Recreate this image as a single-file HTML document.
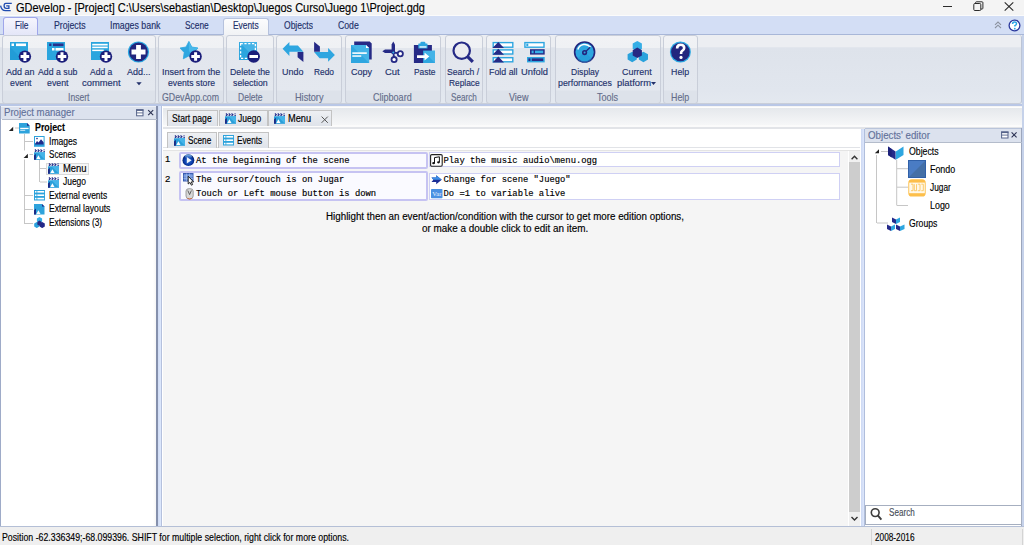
<!DOCTYPE html>
<html><head><meta charset="utf-8">
<style>
*{margin:0;padding:0;box-sizing:border-box}
html,body{width:1024px;height:545px;overflow:hidden;background:#f0f0f0;font-family:"Liberation Sans",sans-serif;position:relative}
.a,.t,svg{position:absolute}
.t{white-space:pre;line-height:normal;transform-origin:0 0;-webkit-text-stroke:0.15px currentColor}
.grp{position:absolute;top:35px;height:69px;border:1px solid #c9ced9;border-radius:3px;background:linear-gradient(#f1f2f5 0,#eff1f4 11.5px,#e2e6ed 12.5px,#e4e8ef 54px,#dde2ea 55px,#dde2ea 100%)}
</style></head><body>
<!-- title bar -->
<div class="a" style="left:0;top:0;width:1024px;height:16px;background:#f4f4f4"></div>
<!-- ribbon tab bar -->
<div class="a" style="left:0;top:15.3px;width:1024px;height:19.7px;background:#d3def5;border-top:1px solid #fbfbfb;border-bottom:1px solid #a8b7d8"></div>
<div class="a" style="left:3px;top:17px;width:35px;height:18px;border:1px solid #9fa6ea;border-bottom:none;border-radius:3px 3px 0 0;background:linear-gradient(#f5f5fd,#e4e6f8)"></div>
<div class="a" style="left:222.5px;top:17.5px;width:46px;height:18px;border:1px solid #b6c2dd;border-bottom:none;border-radius:3px 3px 0 0;background:linear-gradient(#fcfcfd,#f0f2f5)"></div>

<!-- ribbon panel -->
<div class="a" style="left:0;top:35px;width:1024px;height:70px;background:linear-gradient(#eceef2 0,#eceef2 11.8px,#dee3eb 12.8px,#e1e6ee 55px,#e4e9f0 100%)"></div>
<div class="a" style="left:0;top:35px;width:1022px;height:69px;border-right:1px solid #bcc5d6;border-bottom:1px solid #c9ced9;border-radius:0 3px 3px 0"></div>
<div class="a" style="left:0;top:104px;width:1024px;height:2.4px;background:#b9c7e6"></div>

<div class="grp" style="left:1.5px;width:154px"></div>
<div class="grp" style="left:158px;width:65.5px"></div>
<div class="grp" style="left:226px;width:47.5px"></div>
<div class="grp" style="left:276px;width:65.5px"></div>
<div class="grp" style="left:344.5px;width:96.5px"></div>
<div class="grp" style="left:444.5px;width:38.5px"></div>
<div class="grp" style="left:486px;width:65px"></div>
<div class="grp" style="left:554.5px;width:106px"></div>
<div class="grp" style="left:663px;width:34.5px"></div>

<!-- project manager -->
<div class="a" style="left:0;top:106.3px;width:158px;height:421px;border-left:1.3px solid #9eabc8;border-right:2px solid #8590ac;border-bottom:1.3px solid #98a3bc;background:linear-gradient(90deg,#fff 0,#fff 152px,#f3f3f3 156px)"></div>
<div class="a" style="left:1.3px;top:106.3px;width:155.2px;height:13px;background:#dce2ee;border-top:1px solid #eef1f7"></div>
<!-- splitter & main -->
<div class="a" style="left:158px;top:106px;width:4px;height:421px;background:linear-gradient(90deg,#cfdbf4,#dbe6fb 2.5px,#b5c1dd 3.2px,#b5c1dd 4px)"></div>
<div class="a" style="left:162px;top:106px;width:860px;height:420px;background:#f5f5f5;border-left:1.5px solid #fff"></div>
<div class="a" style="left:162.5px;top:106.5px;width:860px;height:1px;background:#fdfdfd"></div>
<div class="a" style="left:162.5px;top:107.5px;width:860px;height:17.5px;background:linear-gradient(#e5e8ec,#f6f7f8)"></div>
<div class="a" style="left:162.5px;top:125px;width:860px;height:2.3px;background:#fbfbfb"></div>
<div class="a" style="left:162.5px;top:127.3px;width:860px;height:1.8px;background:#e2e4e8"></div>
<div class="a" style="left:162.5px;top:129px;width:698.5px;height:18px;background:#fff"></div>
<div class="a" style="left:162.5px;top:147px;width:698.5px;height:1px;background:#e1e3e7"></div>
<div class="a" style="left:162.5px;top:148px;width:698.5px;height:2.3px;background:#fff"></div>
<div class="a" style="left:162.5px;top:150.3px;width:698.5px;height:0.8px;background:#e4e4e4"></div>
<!-- objects editor -->
<div class="a" style="left:860px;top:128.5px;width:5px;height:397.5px;background:linear-gradient(90deg,#fff 0,#fff 0.9px,#ccd8f2 1px,#dce6fc 3.8px,#b0bedc 3.9px,#b0bedc 5px)"></div>
<div class="a" style="left:865px;top:128.4px;width:157.3px;height:397.5px;border-right:1px solid #9ca6bc;background:#fff"></div>
<div class="a" style="left:865.3px;top:128.4px;width:156.2px;height:13.3px;background:#dce2ee;border-top:1px solid #b9c4da"></div>
<div class="a" style="left:1022px;top:35px;width:2px;height:492px;background:#c6d2ea"></div>
<!-- status bar -->
<div class="a" style="left:0;top:525.8px;width:1024px;height:1.6px;background:#b4bfd6"></div>
<div class="a" style="left:0;top:527.4px;width:1024px;height:18px;background:#efefef"></div>
<div class="a" style="left:871px;top:529px;width:1px;height:16px;background:#d4d4d4"></div>
<div class="a" style="left:1022px;top:529px;width:1px;height:16px;background:#d4d4d4"></div>

<svg width="0" height="0" style="position:absolute">
<defs>
<g id="plus"><circle cx="0" cy="0" r="6.2" fill="#1b1e7a"/><path d="M-1.5-4.3h3v2.8h2.8v3h-2.8v2.8h-3v-2.8h-2.8v-3h2.8z" fill="#fff"/></g>
<g id="minus"><circle cx="0" cy="0" r="6.2" fill="#1b1e7a"/><rect x="-4.3" y="-1.5" width="8.6" height="3" fill="#fff"/></g>
<g id="clap">
 <path d="M0.9 0.5L2.3 1.7L0.9 2.9M3.7 0.5L5.1 1.7L3.7 2.9M6.5 0.5L7.9 1.7L6.5 2.9" fill="none" stroke="#1f2a8a" stroke-width="1.15"/>
 <rect x="9.5" y="0.3" width="1.1" height="1.1" fill="#1f2a8a"/><rect x="9.5" y="2" width="1.3" height="1.2" fill="#1f2a8a"/>
 <rect x="0" y="3.3" width="11" height="7.5" fill="#2a9fda"/>
 <path d="M3.5 3.3H11V10.8z" fill="#45b4e8"/>
 <path d="M0 6.4L1.9 4.8V10.8H0z" fill="#1c2a86"/>
 <path d="M2.3 10L4.4 6.3L6.5 10z" fill="#fff"/>
</g>
<g id="evlist">
 <rect x="0" y="0" width="11" height="10.5" fill="#2ea3dc"/>
 <rect x="1" y="1" width="1.5" height="1.6" fill="#fff"/><rect x="3.3" y="1" width="6.8" height="1.6" fill="#fff"/>
 <rect x="1" y="4.4" width="1.5" height="1.6" fill="#fff"/><rect x="3.3" y="4.4" width="6.8" height="1.6" fill="#fff"/>
 <rect x="1" y="7.8" width="1.5" height="1.6" fill="#fff"/><rect x="3.3" y="7.8" width="6.8" height="1.6" fill="#fff"/>
</g>
<g id="hexes">
 <path d="M0-5.2L4.5-2.6V2.6L0 5.2-4.5 2.6V-2.6z" transform="translate(0,0)" fill="#30a6df"/>
</g>
</defs>
</svg>

<!-- title logo -->
<svg style="left:0;top:0" width="14" height="14" viewBox="0 0 14 14"><path d="M11.8 3.3H5.8Q4.1 3.3 4.1 5.7Q4.1 8.3 6.2 8.3H8.9V5.9H6.2" fill="none" stroke="#1f4cb0" stroke-width="1.3"/><path d="M0.6 5.6Q1.4 10.6 5.6 10.6H10.7" fill="none" stroke="#1f4cb0" stroke-width="1.3"/></svg>
<!-- window controls -->
<div class="a" style="left:943px;top:5.5px;width:9px;height:1.2px;background:#2b2b2b"></div>
<svg style="left:973px;top:1px" width="11" height="10" viewBox="0 0 11 10"><rect x="0.8" y="2.5" width="7" height="7" rx="1" fill="none" stroke="#2b2b2b" stroke-width="1"/><path d="M2.6 2.5V1.6Q2.6 0.8 3.4 0.8H9Q9.9 0.8 9.9 1.6V7.2Q9.9 8 9.1 8H7.8" fill="none" stroke="#2b2b2b" stroke-width="1"/></svg>
<svg style="left:1004px;top:1.5px" width="10" height="9" viewBox="0 0 10 9"><path d="M0.7 0.4L9.3 8.6M9.3 0.4L0.7 8.6" stroke="#2b2b2b" stroke-width="1.1"/></svg>
<!-- ribbon right -->
<svg style="left:994px;top:21px" width="8" height="8" viewBox="0 0 8 8"><path d="M1 3.8L4 1L7 3.8M1 7L4 4.2L7 7" fill="none" stroke="#8c93a0" stroke-width="1.1"/></svg>
<svg style="left:1008px;top:19px" width="13" height="13" viewBox="0 0 13 13"><circle cx="6.5" cy="6.5" r="5.4" fill="#fff" stroke="#2c3a9e" stroke-width="1.3"/><path d="M4.6 5Q4.6 3 6.6 3Q8.6 3 8.5 4.8Q8.4 6 6.9 6.6V7.6" fill="none" stroke="#2aa6e6" stroke-width="1.5"/><circle cx="6.8" cy="9.7" r="0.9" fill="#2aa6e6"/></svg>

<!-- ribbon icons -->
<!-- add an event -->
<svg style="left:10px;top:42px" width="22" height="22" viewBox="0 0 22 22">
 <rect x="0" y="0" width="18" height="18" fill="#2aa5de"/><path d="M0 5L13 18H0z" fill="#1e96d2" opacity=".6"/>
 <rect x="1.5" y="1.5" width="2.5" height="2.5" fill="#fff"/><rect x="6" y="1.5" width="10" height="2.6" fill="#fff"/>
 <use href="#plus" x="14.9" y="14.6"/>
</svg>
<!-- add a sub event -->
<svg style="left:47px;top:42px" width="22" height="22" viewBox="0 0 22 22">
 <rect x="0" y="0" width="18" height="18" fill="#2aa5de"/>
 <rect x="2.2" y="1.5" width="2.2" height="2.5" fill="#2a2f8a"/><rect x="6" y="1.5" width="10.5" height="2.6" fill="#2a2f8a"/>
 <rect x="5" y="6" width="2.5" height="2.5" fill="#fff"/><rect x="8.5" y="6" width="8" height="2.6" fill="#fff"/>
 <use href="#plus" x="15" y="14.6"/>
</svg>
<!-- add a comment -->
<svg style="left:91px;top:42px" width="22" height="22" viewBox="0 0 22 22">
 <rect x="0" y="0" width="18" height="18" fill="#2aa5de"/>
 <rect x="1.2" y="1.8" width="15.5" height="1.7" fill="#fff"/><rect x="1.2" y="4.6" width="15.5" height="1.6" fill="#fff"/><rect x="1.2" y="7.6" width="11.5" height="1.5" fill="#fff"/>
 <use href="#plus" x="15" y="14.6"/>
</svg>
<!-- add... -->
<svg style="left:127px;top:41px" width="23" height="23" viewBox="0 0 23 23">
 <circle cx="11.5" cy="11" r="10.6" fill="#2aa8e2"/><circle cx="11.5" cy="11" r="9.4" fill="#22267e"/>
 <path d="M9.1 4h4.8v4.6h4.6v4.8h-4.6v4.6h-4.8v-4.6h-4.6v-4.8h4.6z" fill="#fff"/>
</svg>
<svg style="left:136px;top:81.5px" width="6" height="4" viewBox="0 0 6 4"><path d="M0.3 0.3H5.7L3 3.3Z" fill="#22306a"/></svg>
<!-- star -->
<svg style="left:180px;top:41px" width="24" height="24" viewBox="0 0 24 24">
 <path d="M8.9 0.4L11.8 6.0L18.0 7.0L13.6 11.5L14.5 17.8L8.9 14.9L3.3 17.8L4.2 11.5L0 7.0L6.0 6.0Z" fill="#2ea6e0" stroke="#2ea6e0" stroke-width="0.8" stroke-linejoin="round"/>
 <path d="M8.9 0.4L11.8 6.0L18.0 7.0L13.6 11.5L14.5 17.8L8.9 10z" fill="#48b8ea"/>
 <use href="#plus" x="15.6" y="15.5"/>
</svg>
<!-- delete -->
<svg style="left:239px;top:42px" width="22" height="22" viewBox="0 0 22 22">
 <rect x="0" y="0" width="18" height="18" fill="#2aa5de"/><path d="M0 0H18V18z" fill="#45b3e6"/>
 <path d="M1.6 1.6H16.4V16.4H1.6z" fill="none" stroke="#fff" stroke-width="1.3" stroke-dasharray="2.2 1.6"/>
 <use href="#minus" x="14.7" y="14.5"/>
</svg>
<!-- undo -->
<svg style="left:280px;top:38px" width="60" height="28" viewBox="0 0 60 28">
 <path d="M2.6 10.8L9.4 4.1V7.6H17.9L23.4 13.8H9.4V17.9Z" fill="#2ea6e0"/>
 <path d="M17.6 14.1H23.4V24L17.6 19.3Z" fill="#262a86"/>
 <g transform="translate(31.5 0) rotate(180 13 13.9)">
 <path d="M2.6 10.8L9.4 4.1V7.6H17.9L23.4 13.8H9.4V17.9Z" fill="#2ea6e0"/>
 <path d="M17.6 14.1H23.4V24L17.6 19.3Z" fill="#262a86"/>
 </g>
</svg>
<!-- copy -->
<svg style="left:348px;top:38px" width="90" height="28" viewBox="0 0 90 28">
 <path d="M6.2 3.5H21.7L23.7 5.5V21.5H6.2z" fill="#262a86"/>
 <path d="M3 7H18L21.1 10.1V25H3z" fill="#2ea6e0"/><path d="M3 7H18L21.1 10.1V25z" fill="#48b6e8" opacity=".8"/>
 <path d="M18 7V10.1H21.1z" fill="#fff"/>
 <rect x="4.3" y="14.3" width="14.5" height="1.6" fill="#fff"/><rect x="4.3" y="17.3" width="9" height="1.5" fill="#fff"/>
 <!-- cut -->
 <path d="M45.3 3.5L47 6.5V16H43.6V6.5Z" fill="#262a86"/>
 <path d="M34.3 13.2L37 11.5H45.3V15H37Z" fill="#262a86"/>
 <circle cx="52.3" cy="15.8" r="2.6" fill="#fff" stroke="#262a86" stroke-width="1.8"/>
 <circle cx="46.1" cy="21.6" r="2.6" fill="#fff" stroke="#262a86" stroke-width="1.8"/>
 <path d="M45.3 14.5L50 15.2M45.3 14.5L46 19" stroke="#262a86" stroke-width="1.8"/>
 <circle cx="45.3" cy="14.5" r="1" fill="#35b0ea"/>
 <!-- paste -->
 <rect x="65.9" y="7" width="18" height="18" fill="#262a86"/>
 <rect x="70.3" y="5.6" width="9.2" height="5" rx="0.5" fill="#2ea6e0"/><rect x="72.4" y="3.8" width="5" height="3" rx="1.2" fill="#2ea6e0"/>
 <rect x="71.5" y="8.3" width="7" height="1.3" fill="#fff"/>
 <rect x="75.1" y="12.7" width="11.9" height="12.3" fill="#2ea6e0"/><path d="M75.1 12.7H87V25z" fill="#48b6e8" opacity=".8"/>
 <path d="M69 17.2H76.5V14.6L81.3 18.6L76.5 22.6V20H69z" fill="#fff"/>
</svg>
<!-- search -->
<svg style="left:450px;top:38px" width="100" height="28" viewBox="0 0 100 28">
 <circle cx="11.7" cy="12.7" r="8.2" fill="#ececf0" stroke="#262a86" stroke-width="2.2"/>
 <path d="M6.5 7.5A7 7 0 0 1 17 17z" fill="#dadbe2" opacity="0"/>
 <path d="M17.3 18.3L22.8 23.8" stroke="#262a86" stroke-width="3.2"/>
 <!-- fold all -->
 <rect x="43.2" y="4.6" width="19.6" height="4.6" fill="#fff" stroke="#2ea6e0" stroke-width="1.4"/>
 <rect x="43.2" y="11.9" width="19.6" height="4.1" fill="#fff" stroke="#2ea6e0" stroke-width="1.4"/>
 <rect x="43.2" y="19.7" width="19.6" height="4.1" fill="#fff" stroke="#2ea6e0" stroke-width="1.4"/>
 <path d="M42.5 9.9L48.3 3.9L54 9.9z" fill="#262a86"/>
 <path d="M42.5 16.7L48.3 10.8L54 16.7z" fill="#262a86"/>
 <path d="M42.5 24.5L48.3 18.5L54 24.5z" fill="#262a86"/>
 <!-- unfold -->
 <rect x="74.9" y="4.6" width="19.1" height="4.6" fill="#fff" stroke="#2ea6e0" stroke-width="1.4"/>
 <rect x="76.3" y="5.6" width="2" height="2.6" fill="#2ea6e0"/>
 <rect x="80" y="11.2" width="14.7" height="5.4" fill="#262a86"/>
 <rect x="81.6" y="12.6" width="2" height="2.6" fill="#35aee6"/><rect x="85" y="12.6" width="8.2" height="2.6" fill="#35aee6"/>
 <rect x="77" y="19" width="17.7" height="5.4" fill="#2ea6e0"/>
 <rect x="78.4" y="20.4" width="2" height="2.6" fill="#262a86"/><rect x="81.8" y="20.4" width="11.4" height="2.6" fill="#262a86"/>
</svg>
<!-- display performances / platform / help -->
<svg style="left:570px;top:38px" width="125" height="28" viewBox="0 0 125 28">
 <circle cx="14.6" cy="14" r="10" fill="#2ea6e0" stroke="#22267e" stroke-width="1.6"/>
 <path d="M14.6 14L22 21A10 10 0 0 1 7 21z" fill="#1f98d4" opacity=".5"/>
 <path d="M7.8 11.5A7.3 7.3 0 0 1 20.5 9.2" fill="none" stroke="#fff" stroke-width="1.5"/>
 <path d="M14.6 14.6L20.2 9.2" stroke="#22267e" stroke-width="1.3"/>
 <circle cx="14.6" cy="14.6" r="2.6" fill="#22267e"/><circle cx="14.6" cy="14.6" r="1" fill="#2ea6e0"/>
 <!-- platform -->
 <path d="M67.3 3L71.9 5.6V10.9L67.3 13.5L62.7 10.9V5.6z" fill="#35aee6"/>
 <path d="M62.2 13.7L66.8 16.3V21.6L62.2 24.2L57.6 21.6V16.3z" fill="#2aa2dc"/>
 <path d="M73.4 13.7L78 16.3V21.6L73.4 24.2L68.8 21.6V16.3z" fill="#2aa2dc"/>
 <path d="M67.3 9.6L71.9 12.2V17.5L67.3 20.1L62.7 17.5V12.2z" fill="#252983"/>
 <!-- help -->
 <circle cx="110.4" cy="14" r="10.5" fill="#2aa8e2"/><circle cx="110.4" cy="14" r="9.3" fill="#22267e"/>
 <path d="M107.1 10.6Q107.1 6.8 110.7 6.8Q114.2 6.8 114.2 10Q114.2 12 111.9 13.2Q111.1 13.7 111.1 15.2V16" fill="none" stroke="#fff" stroke-width="2.6"/>
 <circle cx="111" cy="19.4" r="1.6" fill="#fff"/>
</svg>
<svg style="left:651px;top:82px" width="5" height="3" viewBox="0 0 5 3"><path d="M0 0H5L2.5 3Z" fill="#22306a"/></svg>

<!-- project manager caption buttons -->
<svg style="left:135px;top:108px" width="20" height="9" viewBox="0 0 20 9">
 <rect x="1.6" y="1.8" width="6.4" height="6" fill="#fff" stroke="#56638a" stroke-width="1"/><rect x="1.1" y="1.3" width="7.4" height="1.6" fill="#56638a"/><path d="M1.6 4.9H8" stroke="#56638a" stroke-width="0.9"/>
 <path d="M13.2 2.2L18.2 7.2M18.2 2.2L13.2 7.2" stroke="#2c3354" stroke-width="1.1"/>
</svg>
<div class="a" style="left:2px;top:119px;width:155px;height:1px;background:#b4bccb"></div>

<!-- project tree -->
<svg style="left:0;top:120px" width="157" height="110" viewBox="0 0 157 110">
 <g stroke="#c6c6c6" stroke-width="1">
  <path d="M24.5 14V30.5"/><path d="M24.5 39.5V104"/><path d="M25 21.5H33"/><path d="M29.5 34.5H33"/><path d="M25 75.5H33"/><path d="M25 89.5H33"/><path d="M25 103.5H33"/>
  <path d="M39.5 40V62"/><path d="M40 48.5H47"/><path d="M40 62H47"/><path d="M15 8H19"/>
 </g>
 <path d="M8.9 11L13.2 6.8V11z" fill="#222"/>
 <path d="M23.6 38L27.9 33.8V38z" fill="#222"/>
</svg>
<!-- project icon -->
<svg style="left:19px;top:122.5px" width="11" height="11" viewBox="0 0 11 11">
 <path d="M0 0H8L10.7 2.7V10.6H0z" fill="#2ea3dc"/><path d="M8 0L10.7 2.7H8z" fill="#1f2a8a"/>
 <rect x="1.2" y="4.8" width="8.4" height="1.3" fill="#fff"/><rect x="1.2" y="6.8" width="5" height="1" fill="#fff" opacity=".8"/>
</svg>
<!-- images icon -->
<svg style="left:33.5px;top:136px" width="11" height="11" viewBox="0 0 11 11">
 <rect x="0" y="0" width="10.6" height="10.8" fill="#2ea3dc"/><rect x="1" y="1" width="8.6" height="6.5" fill="#fff"/>
 <path d="M1 8L3 5L4.6 6.4L7 3.2L9.6 6.2V8.6H1z" fill="#1f2a8a"/><circle cx="3" cy="2.6" r="0.8" fill="#1f2a8a"/>
</svg>
<svg style="left:33.5px;top:149.2px" width="11" height="11" viewBox="0 0 11 11"><use href="#clap"/></svg>
<div class="a" style="left:46px;top:162.5px;width:43px;height:12.5px;border:1px solid #dadada;background:#f6f6f6"></div>
<svg style="left:47.8px;top:163px" width="11" height="11" viewBox="0 0 11 11"><use href="#clap"/></svg>
<svg style="left:47.8px;top:176.7px" width="11" height="11" viewBox="0 0 11 11"><use href="#clap"/></svg>
<svg style="left:33.7px;top:190px" width="11" height="11" viewBox="0 0 11 11"><use href="#evlist"/></svg>
<svg style="left:33.7px;top:203.5px" width="11" height="11" viewBox="0 0 11 11">
 <path d="M0 0H8L10.5 2.5V10.4H0z" fill="#2ea3dc"/><path d="M8 0L10.5 2.5H8z" fill="#1f2a8a"/>
 <path d="M0 6.2L2 4.5V10.4H0z" fill="#1c2a86"/><path d="M2.3 10L4.4 6.2L6.5 10z" fill="#fff"/>
</svg>
<svg style="left:33.5px;top:216.8px" width="11" height="11" viewBox="-5.5 -5.5 11 11">
 <path d="M0-5.4L2.6-3.9V-0.9L0 0.6L-2.6-0.9V-3.9z" fill="#35aee6"/>
 <path d="M-2.7-0.4L-0.1 1.1V4.1L-2.7 5.6L-5.3 4.1V1.1z" fill="#2aa2dc"/>
 <path d="M2.7-0.4L5.3 1.1V4.1L2.7 5.6L0.1 4.1V1.1z" fill="#22288a"/>
 <path d="M0-1.9L2.2-0.6V1.9L0 3.2L-2.2 1.9V-0.6z" fill="#252983"/>
</svg>

<!-- doc tabs -->
<div class="a" style="left:166.5px;top:110.3px;width:51.5px;height:16px;border:1px solid #c3c3c3;border-bottom:none;background:linear-gradient(#eef0f3,#dfe3ea)"></div>
<div class="a" style="left:218.5px;top:110.3px;width:49px;height:16px;border:1px solid #c3c3c3;border-bottom:none;background:linear-gradient(#eef0f3,#dfe3ea)"></div>
<div class="a" style="left:268px;top:110.3px;width:63.5px;height:16px;border:1px solid #c3c3c3;border-bottom:none;background:linear-gradient(#eef0f3,#dfe3ea)"></div>
<svg style="left:224.6px;top:113.4px" width="11" height="11" viewBox="0 0 11 11"><use href="#clap"/></svg>
<svg style="left:274.2px;top:113.4px" width="11" height="11" viewBox="0 0 11 11"><use href="#clap"/></svg>
<svg style="left:320.5px;top:115.8px" width="8" height="8" viewBox="0 0 8 8"><path d="M0.6 0.6L6.8 6.8M6.8 0.6L0.6 6.8" stroke="#555" stroke-width="1"/></svg>
<!-- inner tabs -->
<div class="a" style="left:167.3px;top:132.3px;width:50px;height:15.5px;border:1px solid #c3c3c3;border-bottom:none;background:linear-gradient(#eef0f3,#dfe3ea)"></div>
<div class="a" style="left:217.7px;top:132.3px;width:51px;height:15.5px;border:1px solid #c3c3c3;border-bottom:none;background:linear-gradient(#eef0f3,#dfe3ea)"></div>
<svg style="left:174px;top:135.2px" width="11" height="11" viewBox="0 0 11 11"><use href="#clap"/></svg>
<svg style="left:223.3px;top:135.3px" width="11" height="11" viewBox="0 0 11 11"><use href="#evlist"/></svg>

<!-- events -->
<div class="a" style="left:179.2px;top:151.5px;width:249px;height:17px;border:2px solid #c6c3f2;border-radius:2px;background:#fafaff"></div>
<div class="a" style="left:429.3px;top:152.3px;width:411px;height:14.5px;border:1px solid #cfd0f4;background:#fff"></div>
<div class="a" style="left:179.2px;top:171.2px;width:249px;height:30.3px;border:2px solid #c6c3f2;border-radius:2px;background:#fafaff"></div>
<div class="a" style="left:429.3px;top:172.8px;width:411px;height:27.2px;border:1px solid #cfd0f4;background:#fff"></div>
<!-- play icon -->
<svg style="left:182px;top:154px" width="13" height="13" viewBox="0 0 13 13">
 <defs><radialGradient id="pg" cx="0.5" cy="0.55" r="0.55"><stop offset="0" stop-color="#2a70d8"/><stop offset="0.65" stop-color="#0a3aa8"/><stop offset="1" stop-color="#001a5e"/></radialGradient>
 <linearGradient id="pg2" x1="0" y1="0" x2="0" y2="1"><stop offset="0" stop-color="#8cc8ff" stop-opacity=".9"/><stop offset="1" stop-color="#8cc8ff" stop-opacity="0"/></linearGradient></defs>
 <circle cx="6.4" cy="6.2" r="5.9" fill="url(#pg)"/>
 <ellipse cx="6.4" cy="2.6" rx="3.6" ry="2" fill="url(#pg2)"/>
 <path d="M4.8 3L9.6 6.2L4.8 9.4z" fill="#f0f4fa"/>
</svg>
<!-- cursor icon -->
<svg style="left:182.8px;top:173.3px" width="12" height="13" viewBox="0 0 12 13">
 <rect x="0.5" y="0.5" width="9.5" height="7.5" fill="#6b8fd8" stroke="#3a5cb0" stroke-width="1"/>
 <path d="M3.5 0.5V8M6.5 0.5V8M0.5 3H10M0.5 5.5H10" stroke="#a9c2f0" stroke-width="0.6"/>
 <path d="M5.2 3.2V11L7 9.4L8.4 12.2L9.6 11.6L8.3 8.9H10.6z" fill="#fff" stroke="#111" stroke-width="0.9"/>
</svg>
<!-- mouse icon -->
<svg style="left:184.5px;top:187.8px" width="10" height="12" viewBox="0 0 10 12">
 <path d="M1 3Q1 0.6 4.6 0.6Q8.2 0.6 8.2 3V8Q8.2 11 4.6 11Q1 11 1 8z" fill="#d8d8d8" stroke="#8a8a8a" stroke-width="0.8"/>
 <path d="M2.8 2.5L4.6 6.6L6.4 2.5" fill="none" stroke="#555" stroke-width="0.9"/>
 <path d="M2.5 10.4Q4.6 11.6 6.8 10.4" stroke="#e05a20" stroke-width="0.8" fill="none"/>
</svg>
<!-- music icon -->
<svg style="left:430px;top:154px" width="13" height="13" viewBox="0 0 13 13">
 <rect x="0.6" y="0.6" width="11.6" height="11.6" rx="1.2" fill="#fff" stroke="#222" stroke-width="1.1"/>
 <path d="M4.5 9V3.6L9.4 2.8V8" fill="none" stroke="#111" stroke-width="1"/>
 <ellipse cx="3.6" cy="9.2" rx="1.4" ry="1.1" fill="#111"/><ellipse cx="8.5" cy="8.3" rx="1.4" ry="1.1" fill="#111"/>
</svg>
<!-- arrow icon -->
<svg style="left:430.5px;top:175px" width="12" height="10" viewBox="0 0 12 10">
 <path d="M0.5 2.4H5.2V0.2L10.8 4.8L5.2 9.2V7H0.5L2.4 4.8z" fill="#1c2f96"/><path d="M0.5 2.4H5.2V0.2L10.8 4.8H2.4z" fill="#3d8ee6"/>
</svg>
<!-- var icon -->
<svg style="left:430.5px;top:188.5px" width="12" height="10" viewBox="0 0 12 10">
 <rect x="0" y="0" width="11.5" height="9.3" rx="0.8" fill="#4a90e2"/>
 <text x="5.8" y="7.2" font-size="6.5" text-anchor="middle" fill="#e8f2ff" font-family="Liberation Serif">Var</text>
</svg>
<!-- scrollbar -->
<div class="a" style="left:847.5px;top:151px;width:1px;height:375px;background:#fff"></div><div class="a" style="left:848.8px;top:151px;width:11.2px;height:375px;background:#f0f0f0"></div>
<div class="a" style="left:849px;top:162px;width:11px;height:349.5px;background:#cdcdcd"></div>
<svg style="left:849px;top:151.8px" width="11" height="11" viewBox="0 0 11 11"><path d="M2.6 7.2L5.5 4.3L8.4 7.2" fill="none" stroke="#333" stroke-width="1.4"/></svg>
<svg style="left:849px;top:513px" width="11" height="11" viewBox="0 0 11 11"><path d="M2.5 4L5.5 7L8.5 4" fill="none" stroke="#333" stroke-width="1.4"/></svg>

<!-- objects editor caption buttons -->
<svg style="left:999px;top:130px" width="22" height="10" viewBox="0 0 22 10">
 <rect x="2.6" y="2" width="6.4" height="6" fill="#fff" stroke="#56638a" stroke-width="1"/><rect x="2.1" y="1.5" width="7.4" height="1.6" fill="#56638a"/><path d="M2.6 5.1H9" stroke="#56638a" stroke-width="0.9"/>
 <path d="M12.6 2.4L17.6 7.4M17.6 2.4L12.6 7.4" stroke="#2c3354" stroke-width="1.1"/>
</svg>
<div class="a" style="left:865px;top:141.5px;width:157px;height:1px;background:#b4bccb"></div>
<!-- objects tree -->
<svg style="left:865px;top:142px" width="157" height="95" viewBox="0 0 157 95">
 <g stroke="#c6c6c6" stroke-width="1">
  <path d="M11.5 13V81"/><path d="M12 81H23"/><path d="M16 9.5H23"/>
  <path d="M31.7 18V63.5"/><path d="M32 26.7H43"/><path d="M32 45.2H43"/><path d="M32 63.5H43"/>
 </g>
 <path d="M9.8 11.3L14 7.3V11.3z" fill="#222"/>
</svg>
<!-- objects book icon -->
<svg style="left:888.4px;top:146.3px" width="16" height="14" viewBox="0 0 16 14">
 <path d="M0 0.6L7.6 5.6V13.8L0 9z" fill="#252a8a"/><path d="M15.5 0.6L7.8 5.6V13.8L15.5 9z" fill="#2ea6e0"/>
 <path d="M0 0.6L3.6 3V11.4L0 9z" fill="#1c217a"/>
</svg>
<!-- fondo -->
<svg style="left:907.9px;top:160.1px" width="18" height="18" viewBox="0 0 18 18">
 <rect x="0.5" y="0.5" width="17" height="17" fill="#4a7cc4" stroke="#3060a8" stroke-width="1"/><path d="M17 1V17H1z" fill="#446fa6"/>
</svg>
<!-- jugar -->
<svg style="left:907.9px;top:178.6px" width="18" height="18" viewBox="0 0 18 18">
 <rect x="0.3" y="0.3" width="17.4" height="17.2" rx="3.6" fill="#fdbf4a"/>
 <rect x="1.2" y="3.6" width="15.6" height="10.6" fill="#fff8e8"/>
 <path d="M3 5.2h2v6.5h-2M6.3 5.2v6.5h2.2v-6.5M9.8 5.2h2.2v6.5h-2.2M13.3 5.2h2v6.5h-2" fill="none" stroke="#fcc660" stroke-width="0.9"/>
</svg>
<!-- groups -->
<svg style="left:887px;top:217px" width="18" height="15" viewBox="0 0 18 15">
 <path d="M5 0.5L9 2.5V7L5 5z" fill="#252a8a"/><path d="M13 0.5L9 2.5V7L13 5z" fill="#2ea6e0"/>
 <path d="M0 7.5L4 9.5V14L0 12z" fill="#252a8a"/><path d="M8 7.5L4 9.5V14L8 12z" fill="#2ea6e0"/>
 <path d="M9 7.5L13 9.5V14L9 12z" fill="#252a8a"/><path d="M17.5 7.5L13 9.5V14L17.5 12z" fill="#2ea6e0"/>
</svg>
<!-- search box -->
<div class="a" style="left:865.3px;top:505.4px;width:156.6px;height:20px;border:1px solid #a6afc0;background:#fff"></div>
<svg style="left:869px;top:507px" width="14" height="15" viewBox="0 0 14 15">
 <circle cx="6.2" cy="5.6" r="3.9" fill="none" stroke="#3d3d3d" stroke-width="1.6"/><path d="M8.8 8.4L12.4 12.6" stroke="#3d3d3d" stroke-width="1.9"/>
</svg>

<div class="t" style='left:16.00px;top:0.94px;font-size:12.00px;color:#000;font-family:"Liberation Sans",sans-serif;transform:scale(0.9138,1.0000);transform-origin:0 10.86px'>GDevelop - [Project] C:\Users\sebastian\Desktop\Juegos Curso\Juego 1\Project.gdg</div>
<div class="t" style='left:14.50px;top:20.15px;font-size:10.00px;color:#22306a;font-family:"Liberation Sans",sans-serif;transform:scale(0.8372,1.0000);transform-origin:0 9.05px'>File</div>
<div class="t" style='left:53.80px;top:20.15px;font-size:10.00px;color:#22306a;font-family:"Liberation Sans",sans-serif;transform:scale(0.8720,1.0000);transform-origin:0 9.05px'>Projects</div>
<div class="t" style='left:109.80px;top:20.15px;font-size:10.00px;color:#22306a;font-family:"Liberation Sans",sans-serif;transform:scale(0.8819,1.0000);transform-origin:0 9.05px'>Images bank</div>
<div class="t" style='left:184.80px;top:20.15px;font-size:10.00px;color:#22306a;font-family:"Liberation Sans",sans-serif;transform:scale(0.8357,1.0000);transform-origin:0 9.05px'>Scene</div>
<div class="t" style='left:233.00px;top:20.15px;font-size:10.00px;color:#22306a;font-family:"Liberation Sans",sans-serif;transform:scale(0.8372,1.0000);transform-origin:0 9.05px'>Events</div>
<div class="t" style='left:283.90px;top:20.15px;font-size:10.00px;color:#22306a;font-family:"Liberation Sans",sans-serif;transform:scale(0.8524,1.0000);transform-origin:0 9.05px'>Objects</div>
<div class="t" style='left:338.40px;top:20.15px;font-size:10.00px;color:#22306a;font-family:"Liberation Sans",sans-serif;transform:scale(0.8701,1.0000);transform-origin:0 9.05px'>Code</div>
<div class="t" style='left:5.50px;top:65.77px;font-size:10.20px;color:#22306a;font-family:"Liberation Sans",sans-serif;transform:scale(0.8824,0.9300);transform-origin:0 9.23px'>Add an</div>
<div class="t" style='left:9.50px;top:76.77px;font-size:10.20px;color:#22306a;font-family:"Liberation Sans",sans-serif;transform:scale(0.8627,0.9300);transform-origin:0 9.23px'>event</div>
<div class="t" style='left:38.00px;top:65.77px;font-size:10.20px;color:#22306a;font-family:"Liberation Sans",sans-serif;transform:scale(0.8607,0.9300);transform-origin:0 9.23px'>Add a sub</div>
<div class="t" style='left:47.00px;top:76.77px;font-size:10.20px;color:#22306a;font-family:"Liberation Sans",sans-serif;transform:scale(0.8627,0.9300);transform-origin:0 9.23px'>event</div>
<div class="t" style='left:89.50px;top:65.77px;font-size:10.20px;color:#22306a;font-family:"Liberation Sans",sans-serif;transform:scale(0.8376,0.9300);transform-origin:0 9.23px'>Add a</div>
<div class="t" style='left:82.00px;top:76.77px;font-size:10.20px;color:#22306a;font-family:"Liberation Sans",sans-serif;transform:scale(0.9187,0.9300);transform-origin:0 9.23px'>comment</div>
<div class="t" style='left:126.50px;top:65.77px;font-size:10.20px;color:#22306a;font-family:"Liberation Sans",sans-serif;transform:scale(0.8826,0.9300);transform-origin:0 9.23px'>Add...</div>
<div class="t" style='left:162.00px;top:65.77px;font-size:10.20px;color:#22306a;font-family:"Liberation Sans",sans-serif;transform:scale(0.8875,0.9300);transform-origin:0 9.23px'>Insert from the</div>
<div class="t" style='left:167.60px;top:76.77px;font-size:10.20px;color:#22306a;font-family:"Liberation Sans",sans-serif;transform:scale(0.8486,0.9300);transform-origin:0 9.23px'>events store</div>
<div class="t" style='left:230.00px;top:65.77px;font-size:10.20px;color:#22306a;font-family:"Liberation Sans",sans-serif;transform:scale(0.8611,0.9300);transform-origin:0 9.23px'>Delete the</div>
<div class="t" style='left:232.50px;top:76.77px;font-size:10.20px;color:#22306a;font-family:"Liberation Sans",sans-serif;transform:scale(0.8628,0.9300);transform-origin:0 9.23px'>selection</div>
<div class="t" style='left:282.00px;top:65.77px;font-size:10.20px;color:#22306a;font-family:"Liberation Sans",sans-serif;transform:scale(0.8785,0.9300);transform-origin:0 9.23px'>Undo</div>
<div class="t" style='left:314.00px;top:65.77px;font-size:10.20px;color:#22306a;font-family:"Liberation Sans",sans-serif;transform:scale(0.8210,0.9300);transform-origin:0 9.23px'>Redo</div>
<div class="t" style='left:350.70px;top:65.77px;font-size:10.20px;color:#22306a;font-family:"Liberation Sans",sans-serif;transform:scale(0.8867,0.9300);transform-origin:0 9.23px'>Copy</div>
<div class="t" style='left:385.00px;top:65.77px;font-size:10.20px;color:#22306a;font-family:"Liberation Sans",sans-serif;transform:scale(0.9269,0.9300);transform-origin:0 9.23px'>Cut</div>
<div class="t" style='left:413.50px;top:65.77px;font-size:10.20px;color:#22306a;font-family:"Liberation Sans",sans-serif;transform:scale(0.8249,0.9300);transform-origin:0 9.23px'>Paste</div>
<div class="t" style='left:447.40px;top:65.77px;font-size:10.20px;color:#22306a;font-family:"Liberation Sans",sans-serif;transform:scale(0.8484,0.9300);transform-origin:0 9.23px'>Search /</div>
<div class="t" style='left:448.50px;top:76.77px;font-size:10.20px;color:#22306a;font-family:"Liberation Sans",sans-serif;transform:scale(0.8211,0.9300);transform-origin:0 9.23px'>Replace</div>
<div class="t" style='left:488.70px;top:65.77px;font-size:10.20px;color:#22306a;font-family:"Liberation Sans",sans-serif;transform:scale(0.8677,0.9300);transform-origin:0 9.23px'>Fold all</div>
<div class="t" style='left:521.00px;top:65.77px;font-size:10.20px;color:#22306a;font-family:"Liberation Sans",sans-serif;transform:scale(0.9167,0.9300);transform-origin:0 9.23px'>Unfold</div>
<div class="t" style='left:570.80px;top:65.77px;font-size:10.20px;color:#22306a;font-family:"Liberation Sans",sans-serif;transform:scale(0.8412,0.9300);transform-origin:0 9.23px'>Display</div>
<div class="t" style='left:558.30px;top:76.77px;font-size:10.20px;color:#22306a;font-family:"Liberation Sans",sans-serif;transform:scale(0.8652,0.9300);transform-origin:0 9.23px'>performances</div>
<div class="t" style='left:622.30px;top:65.77px;font-size:10.20px;color:#22306a;font-family:"Liberation Sans",sans-serif;transform:scale(0.8739,0.9300);transform-origin:0 9.23px'>Current</div>
<div class="t" style='left:617.20px;top:76.77px;font-size:10.20px;color:#22306a;font-family:"Liberation Sans",sans-serif;transform:scale(0.9236,0.9300);transform-origin:0 9.23px'>platform</div>
<div class="t" style='left:670.80px;top:65.77px;font-size:10.20px;color:#22306a;font-family:"Liberation Sans",sans-serif;transform:scale(0.8686,0.9300);transform-origin:0 9.23px'>Help</div>
<div class="t" style='left:68.00px;top:90.71px;font-size:10.60px;color:#646d8a;font-family:"Liberation Sans",sans-serif;transform:scale(0.8113,1.0000);transform-origin:0 9.59px'>Insert</div>
<div class="t" style='left:162.00px;top:90.71px;font-size:10.60px;color:#646d8a;font-family:"Liberation Sans",sans-serif;transform:scale(0.8274,1.0000);transform-origin:0 9.59px'>GDevApp.com</div>
<div class="t" style='left:237.60px;top:90.71px;font-size:10.60px;color:#646d8a;font-family:"Liberation Sans",sans-serif;transform:scale(0.8033,1.0000);transform-origin:0 9.59px'>Delete</div>
<div class="t" style='left:294.50px;top:90.71px;font-size:10.60px;color:#646d8a;font-family:"Liberation Sans",sans-serif;transform:scale(0.8645,1.0000);transform-origin:0 9.59px'>History</div>
<div class="t" style='left:373.30px;top:90.71px;font-size:10.60px;color:#646d8a;font-family:"Liberation Sans",sans-serif;transform:scale(0.8532,1.0000);transform-origin:0 9.59px'>Clipboard</div>
<div class="t" style='left:450.60px;top:90.71px;font-size:10.60px;color:#646d8a;font-family:"Liberation Sans",sans-serif;transform:scale(0.7684,1.0000);transform-origin:0 9.59px'>Search</div>
<div class="t" style='left:508.60px;top:90.71px;font-size:10.60px;color:#646d8a;font-family:"Liberation Sans",sans-serif;transform:scale(0.8516,1.0000);transform-origin:0 9.59px'>View</div>
<div class="t" style='left:597.30px;top:90.71px;font-size:10.60px;color:#646d8a;font-family:"Liberation Sans",sans-serif;transform:scale(0.8531,1.0000);transform-origin:0 9.59px'>Tools</div>
<div class="t" style='left:671.25px;top:90.71px;font-size:10.60px;color:#646d8a;font-family:"Liberation Sans",sans-serif;transform:scale(0.8373,1.0000);transform-origin:0 9.59px'>Help</div>
<div class="t" style='left:3.60px;top:105.93px;font-size:10.80px;color:#62719a;font-family:"Liberation Sans",sans-serif;transform:scale(0.8912,1.0000);transform-origin:0 9.77px'>Project manager</div>
<div class="t" style='left:34.50px;top:121.89px;font-size:10.40px;color:#000;font-family:"Liberation Sans",sans-serif;transform:scale(0.8486,1.0000);transform-origin:0 9.41px;font-weight:bold'>Project</div>
<div class="t" style='left:48.90px;top:135.95px;font-size:10.00px;color:#000;font-family:"Liberation Sans",sans-serif;transform:scale(0.8568,1.0000);transform-origin:0 9.05px'>Images</div>
<div class="t" style='left:48.90px;top:149.45px;font-size:10.00px;color:#000;font-family:"Liberation Sans",sans-serif;transform:scale(0.8064,1.0000);transform-origin:0 9.05px'>Scenes</div>
<div class="t" style='left:63.00px;top:162.95px;font-size:10.00px;color:#000;font-family:"Liberation Sans",sans-serif;transform:scale(0.9434,1.0000);transform-origin:0 9.05px'>Menu</div>
<div class="t" style='left:63.00px;top:176.45px;font-size:10.00px;color:#000;font-family:"Liberation Sans",sans-serif;transform:scale(0.8440,1.0000);transform-origin:0 9.05px'>Juego</div>
<div class="t" style='left:48.90px;top:189.95px;font-size:10.00px;color:#000;font-family:"Liberation Sans",sans-serif;transform:scale(0.8428,1.0000);transform-origin:0 9.05px'>External events</div>
<div class="t" style='left:48.90px;top:203.45px;font-size:10.00px;color:#000;font-family:"Liberation Sans",sans-serif;transform:scale(0.8629,1.0000);transform-origin:0 9.05px'>External layouts</div>
<div class="t" style='left:48.90px;top:216.95px;font-size:10.00px;color:#000;font-family:"Liberation Sans",sans-serif;transform:scale(0.8307,1.0000);transform-origin:0 9.05px'>Extensions (3)</div>
<div class="t" style='left:172.30px;top:113.05px;font-size:10.00px;color:#000;font-family:"Liberation Sans",sans-serif;transform:scale(0.8601,1.0000);transform-origin:0 9.05px'>Start page</div>
<div class="t" style='left:238.00px;top:113.05px;font-size:10.00px;color:#000;font-family:"Liberation Sans",sans-serif;transform:scale(0.8477,1.0000);transform-origin:0 9.05px'>Juego</div>
<div class="t" style='left:287.70px;top:113.05px;font-size:10.00px;color:#000;font-family:"Liberation Sans",sans-serif;transform:scale(0.9234,1.0000);transform-origin:0 9.05px'>Menu</div>
<div class="t" style='left:187.50px;top:134.75px;font-size:10.00px;color:#000;font-family:"Liberation Sans",sans-serif;transform:scale(0.8181,1.0000);transform-origin:0 9.05px'>Scene</div>
<div class="t" style='left:237.00px;top:134.75px;font-size:10.00px;color:#000;font-family:"Liberation Sans",sans-serif;transform:scale(0.8241,1.0000);transform-origin:0 9.05px'>Events</div>
<div class="t" style='left:165.00px;top:153.30px;font-size:9.50px;color:#000;font-family:"Liberation Sans",sans-serif'>1</div>
<div class="t" style='left:165.00px;top:172.90px;font-size:9.50px;color:#000;font-family:"Liberation Sans",sans-serif'>2</div>
<div class="t" style='left:196.00px;top:156.45px;font-size:8.83px;color:#000;font-family:"Liberation Mono",monospace'>At the beginning of the scene</div>
<div class="t" style='left:196.00px;top:175.45px;font-size:8.83px;color:#000;font-family:"Liberation Mono",monospace'>The cursor/touch is on Jugar</div>
<div class="t" style='left:196.00px;top:189.15px;font-size:8.83px;color:#000;font-family:"Liberation Mono",monospace'>Touch or Left mouse button is down</div>
<div class="t" style='left:443.50px;top:156.45px;font-size:8.83px;color:#000;font-family:"Liberation Mono",monospace'>Play the music audio\menu.ogg</div>
<div class="t" style='left:443.50px;top:175.45px;font-size:8.83px;color:#000;font-family:"Liberation Mono",monospace'>Change for scene "Juego"</div>
<div class="t" style='left:443.50px;top:189.15px;font-size:8.83px;color:#000;font-family:"Liberation Mono",monospace'>Do =1 to variable alive</div>
<div class="t" style='left:326.30px;top:211.35px;font-size:10.00px;color:#000;font-family:"Liberation Sans",sans-serif;transform:scale(0.9787,1.0000);transform-origin:0 9.05px'>Highlight then an event/action/condition with the cursor to get more edition options,</div>
<div class="t" style='left:421.70px;top:223.25px;font-size:10.00px;color:#000;font-family:"Liberation Sans",sans-serif;transform:scale(0.9906,1.0000);transform-origin:0 9.05px'>or make a double click to edit an item.</div>
<div class="t" style='left:867.70px;top:128.93px;font-size:10.80px;color:#62719a;font-family:"Liberation Sans",sans-serif;transform:scale(0.9012,1.0000);transform-origin:0 9.77px'>Objects' editor</div>
<div class="t" style='left:909.40px;top:145.95px;font-size:10.00px;color:#000;font-family:"Liberation Sans",sans-serif;transform:scale(0.8730,1.0000);transform-origin:0 9.05px'>Objects</div>
<div class="t" style='left:929.60px;top:163.95px;font-size:10.00px;color:#000;font-family:"Liberation Sans",sans-serif;transform:scale(0.8886,1.0000);transform-origin:0 9.05px'>Fondo</div>
<div class="t" style='left:929.60px;top:181.95px;font-size:10.00px;color:#000;font-family:"Liberation Sans",sans-serif;transform:scale(0.8315,1.0000);transform-origin:0 9.05px'>Jugar</div>
<div class="t" style='left:929.60px;top:199.95px;font-size:10.00px;color:#000;font-family:"Liberation Sans",sans-serif;transform:scale(0.8899,1.0000);transform-origin:0 9.05px'>Logo</div>
<div class="t" style='left:909.40px;top:217.95px;font-size:10.00px;color:#000;font-family:"Liberation Sans",sans-serif;transform:scale(0.8629,1.0000);transform-origin:0 9.05px'>Groups</div>
<div class="t" style='left:888.50px;top:507.25px;font-size:10.00px;color:#4a4f5a;font-family:"Liberation Sans",sans-serif;transform:scale(0.8110,1.0000);transform-origin:0 9.05px'>Search</div>
<div class="t" style='left:1.70px;top:532.18px;font-size:10.30px;color:#000;font-family:"Liberation Sans",sans-serif;transform:scale(0.8519,1.0000);transform-origin:0 9.32px'>Position -62.336349;-68.099396. SHIFT for multiple selection, right click for more options.</div>
<div class="t" style='left:874.60px;top:531.68px;font-size:10.30px;color:#000;font-family:"Liberation Sans",sans-serif;transform:scale(0.8020,1.0000);transform-origin:0 9.32px'>2008-2016</div>
</body></html>
